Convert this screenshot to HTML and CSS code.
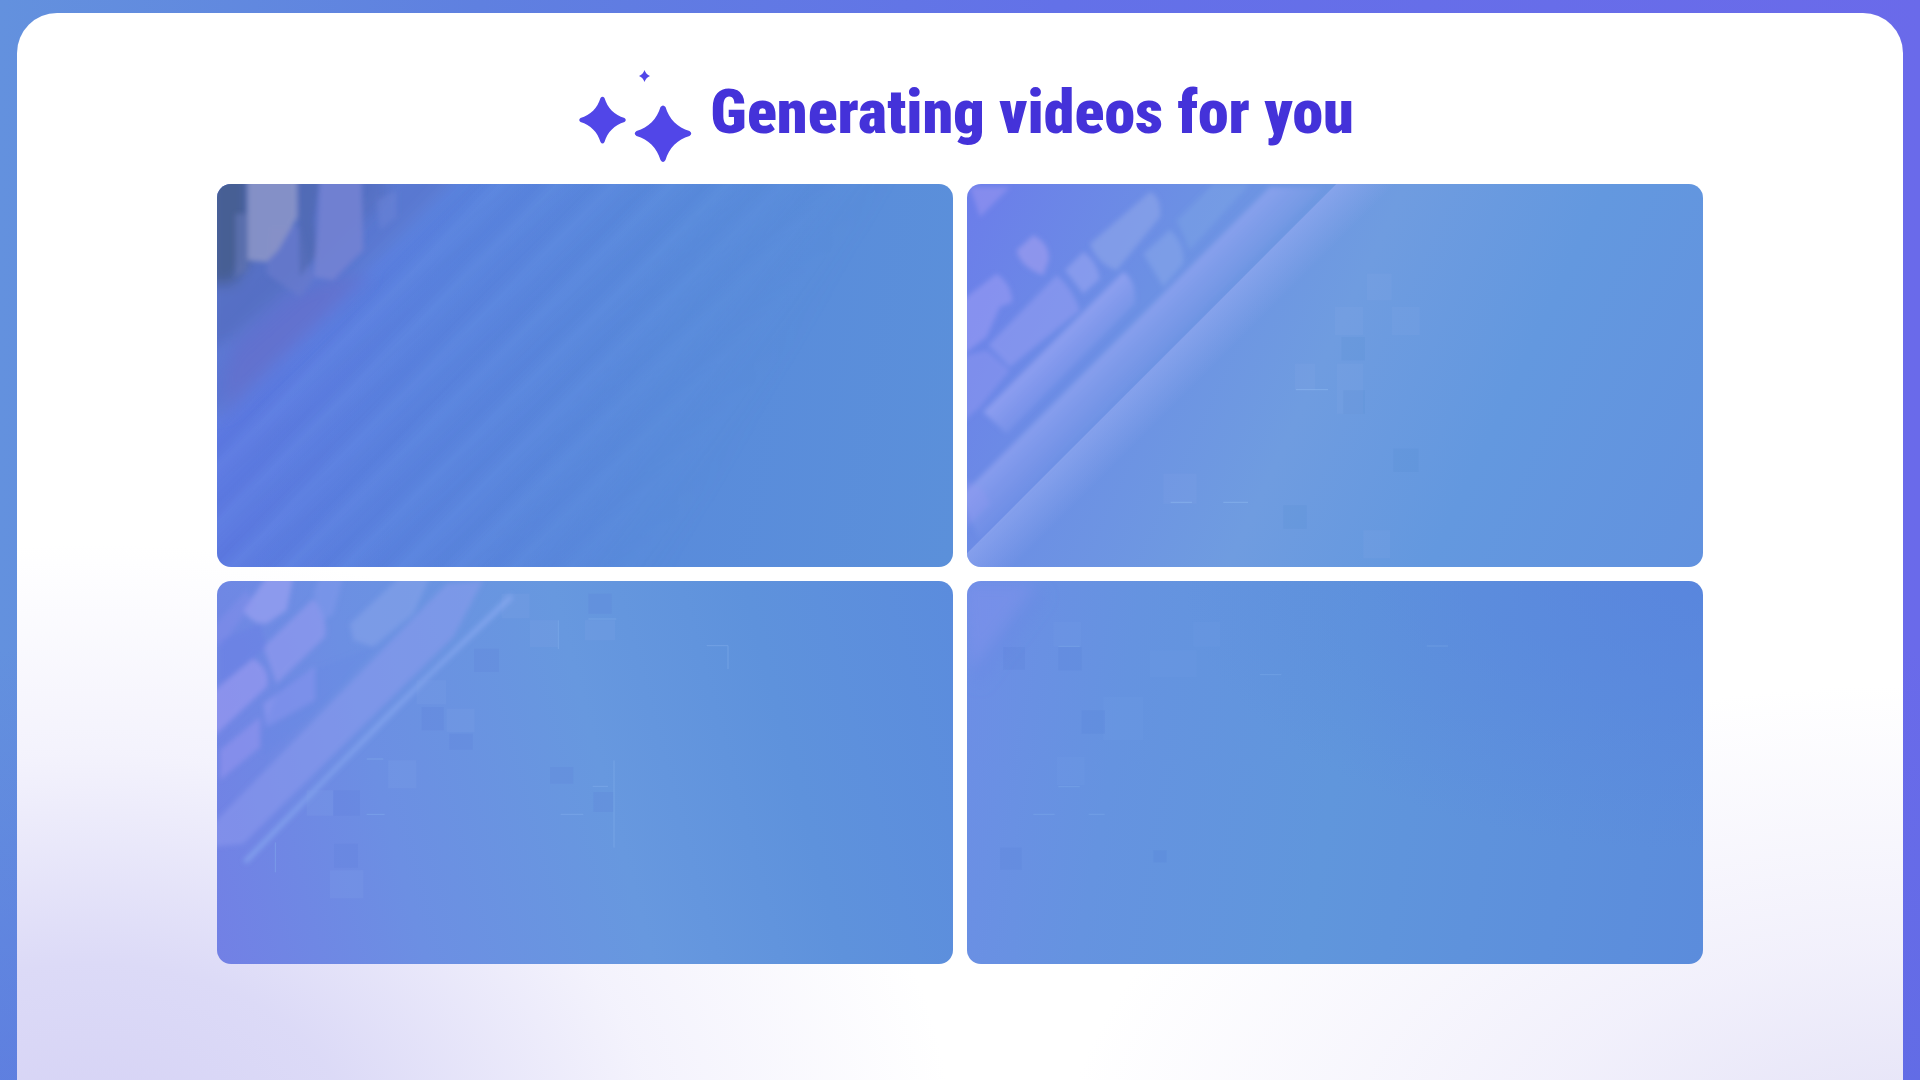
FILE: index.html
```html
<!DOCTYPE html>
<html lang="en">
<head>
    <meta charset="UTF-8">
    <meta name="viewport" content="width=device-width, initial-scale=1.0">
    <link rel="stylesheet" href="styles.css">
    <title>Generating videos</title>
</head>
<body>
    <main class="panel">
        <h1 class="title">
            <svg class="sparkles" viewBox="0 0 116 94" aria-hidden="true">
                <path d="M66.5 0 Q68 4.500 72 6 Q68 7.500 66.500 12 Q65 7.500 61 6 Q65 4.500 66.500 0Z"/>
                <path d="M22.500 28 Q24.500 25.500 26.500 28 C29.500 38 36.500 45 46.500 48 Q49 50 46.500 52 C36.500 55 29.500 62 26.500 72 Q24.500 75 22.500 72 C19.500 62 12.500 55 2.500 52 Q0 50 2.500 48 C12.500 45 19.500 38 22.500 28Z"/>
                <path d="M82.500 37 Q85 34 87.500 37 C91 49 99.500 57.500 111.500 61 Q115 63.500 111.500 66 C99.500 69.500 91 78 87.500 90 Q85 94 82.500 90 C79 78 70.500 69.500 58.500 66 Q55 63.500 58.500 61 C70.500 57.500 79 49 82.500 37Z"/>
            </svg>
            <span class="title-text">Generating videos for you</span>
        </h1>

        <div class="videos">
            <div class="video video-one">
                <svg viewBox="51 41 2208 1149" preserveAspectRatio="none" aria-hidden="true">
                    <defs>
                        <filter id="soft" x="-20%" y="-20%" width="140%" height="140%"><feGaussianBlur stdDeviation="8"/></filter>
                        <filter id="softer" x="-30%" y="-30%" width="160%" height="160%"><feGaussianBlur stdDeviation="20"/></filter>
                        <linearGradient id="edgeOuter" gradientUnits="userSpaceOnUse" x1="600" y1="600" x2="690" y2="690">
                            <stop offset="0" stop-color="#93aaf0" stop-opacity="0.65"/>
                            <stop offset="1" stop-color="#93aaf0" stop-opacity="0"/>
                        </linearGradient>
                        <linearGradient id="edgeMiddle" gradientUnits="userSpaceOnUse" x1="505" y1="505" x2="600" y2="600">
                            <stop offset="0" stop-color="#97a8f2" stop-opacity="0.65"/>
                            <stop offset="1" stop-color="#97a8f2" stop-opacity="0.05"/>
                        </linearGradient>
                        <linearGradient id="edgeInner" gradientUnits="userSpaceOnUse" x1="412" y1="412" x2="500" y2="500">
                            <stop offset="0" stop-color="#9ca8f4" stop-opacity="0.7"/>
                            <stop offset="1" stop-color="#9ca8f4" stop-opacity="0.1"/>
                        </linearGradient>
                        <linearGradient id="ridge" gradientUnits="userSpaceOnUse" x1="51" y1="41" x2="136" y2="126" spreadMethod="repeat">
                            <stop offset="0" stop-color="#6d9bea" stop-opacity="0.2"/>
                            <stop offset="0.65" stop-color="#4a74d0" stop-opacity="0.14"/>
                            <stop offset="1" stop-color="#6d9bea" stop-opacity="0.2"/>
                        </linearGradient>
                        <linearGradient id="ridgeFade" x1="0" y1="0" x2="1" y2="0.3">
                            <stop offset="0.1" stop-color="#fff"/>
                            <stop offset="0.6" stop-color="#bbb"/>
                            <stop offset="0.85" stop-color="#000"/>
                        </linearGradient>
                        <mask id="ridgeMask" maskUnits="userSpaceOnUse" x="51" y="41" width="2208" height="1149">
                            <rect x="51" y="41" width="2208" height="1149" fill="url(#ridgeFade)"/>
                        </mask>
                    </defs>
                    <rect x="51" y="41" width="2208" height="1149" fill="url(#ridge)" mask="url(#ridgeMask)"/>
                    <g filter="url(#softer)">
                        <path d="M20 0H800L60 740H20Z" fill="#5972c6" fill-opacity="0.55"/>
                        <path d="M20 0H560V90L380 260L100 500L20 540Z" fill="#526cb9" fill-opacity="0.55"/>
                        <path d="M20 0H150V260L100 340H20Z" fill="#465f94"/>
                        <path d="M60 600L400 300L520 320L80 740Z" fill="#5f73d2" fill-opacity="0.5"/>
                        <path d="M100 520L260 370L480 330L300 500L80 700Z" fill="#6570cd" fill-opacity="0.5"/>
                    </g>
                    <g filter="url(#soft)">
                        <path d="M210 170H300L340 330L300 380L200 310Z" fill="#687bcd" fill-opacity="0.7"/>
                        <path d="M142 20H292V140L235 240L200 275L142 270Z" fill="#8a94c8" fill-opacity="0.9"/>
                        <path d="M292 20H360L340 150L350 250L300 320Z" fill="#5069b0" fill-opacity="0.7"/>
                        <path d="M360 20H485L490 240L400 330L340 320L350 200Z" fill="#7482d3" fill-opacity="0.85"/>
                        <path d="M530 90L590 60V140L540 180Z" fill="#7186da" fill-opacity="0.4"/>
                        <path d="M106 130H142V300L106 320Z" fill="#5f73b4" fill-opacity="0.7"/>
                    </g>
                </svg>
            </div>
            <div class="video video-two">
                <svg viewBox="51 41 2208 1149" preserveAspectRatio="none" aria-hidden="true">
                    <path d="M20 1180L1200 0H1480L150 1330Z" fill="url(#edgeOuter)"/>
                    <g filter="url(#soft)">
                        <path d="M30 980L740 270L960 50H1120L90 1110Z" fill="url(#edgeMiddle)"/>
                        <path d="M100 725L520 305Q560 330 555 400L170 790Z" fill="url(#edgeInner)"/>
                        <path d="M115 525L320 315Q365 350 390 420L180 590Z" fill="#939df2" fill-opacity="0.6"/>
                        <path d="M420 220L600 65Q635 80 630 140L500 300Q440 280 420 220Z" fill="#90a7ea" fill-opacity="0.6"/>
                        <path d="M580 250L660 178Q705 220 700 280L640 350Z" fill="#8ba9ec" fill-opacity="0.5"/>
                        <path d="M200 240L250 195Q300 220 296 270L280 315Q210 290 200 240Z" fill="#9698ee" fill-opacity="0.8"/>
                        <path d="M345 300L400 245Q440 270 450 325L400 370Z" fill="#91a1f0" fill-opacity="0.7"/>
                        <path d="M30 395L140 310Q185 340 187 395L150 410L110 500L30 560Z" fill="#9599f3" fill-opacity="0.65"/>
                        <path d="M30 560L110 540L180 600L90 710L30 760Z" fill="#9499f1" fill-opacity="0.45"/>
                        <path d="M680 150L790 40H900L720 240Z" fill="#7fa8e6" fill-opacity="0.4"/>
                        <path d="M30 920L100 960L120 1000L30 1090Z" fill="#9499f1" fill-opacity="0.3"/>
                        <path d="M60 50L180 50L90 140Z" fill="#a39cf2" fill-opacity="0.45"/>
                    </g>
                    <g fill="#8caae8" fill-opacity="0.14">
                        <path d="M1155 410h84v84h-84zM1325 410h84v84h-84zM1250 310h75v80h-75zM1160 580h80v150h-80zM1035 580h60v80h-60zM640 910h100v90h-100zM1240 1080h80v84h-80z"/>
                        <path fill="#4f86ce" d="M1175 500h70v70h-70zM1330 835h75v70h-75zM1000 1005h70v70h-70zM1180 660h65v70h-65z"/>
                    </g>
                    <path d="M1038 658h96M662 996h64M820 996h74" stroke="#8db8f0" stroke-width="3" opacity="0.6"/>
                </svg>
            </div>
            <div class="video video-three">
                <svg viewBox="51 62 2208 1149" preserveAspectRatio="none" aria-hidden="true">
                    <g filter="url(#soft)">
                        <path d="M30 800L740 70L850 60L760 230L130 850L30 860Z" fill="#929ef0" fill-opacity="0.45"/>
                        <path d="M130 900L560 460L930 100L940 115L700 340L400 640L140 910Z" fill="#88a8f0" fill-opacity="0.75"/>
                        <path d="M20 410L160 295Q215 330 200 380L40 530Z" fill="#999af1" fill-opacity="0.65"/>
                        <path d="M190 260L340 115Q385 170 375 230L230 370Z" fill="#959bf0" fill-opacity="0.6"/>
                        <path d="M130 150L200 50H280L260 150L200 190Q150 190 130 150Z" fill="#98a0f1" fill-opacity="0.7"/>
                        <path d="M340 100L360 50H430L400 160L370 180Z" fill="#8499ed" fill-opacity="0.5"/>
                        <path d="M450 190L600 50H690L640 160L520 260L460 240Z" fill="#86a2ea" fill-opacity="0.6"/>
                        <path d="M190 430L300 350L345 320V420L200 500Z" fill="#9199f1" fill-opacity="0.6"/>
                        <path d="M60 570L180 470V560L60 660Z" fill="#9696f1" fill-opacity="0.55"/>
                        <path d="M20 220L140 90L160 130L60 260Z" fill="#8f92f0" fill-opacity="0.3"/>
                        <path d="M200 260L60 370V240L180 190Z" fill="#6a80e6" fill-opacity="0.5"/>
                        <path d="M240 370L540 250L330 470L190 590L180 540Z" fill="#6584e4" fill-opacity="0.25"/>
                    </g>
                    <g fill="#86a4ea" fill-opacity="0.18">
                        <path d="M905 100h84v74h-84zM990 180h84v80h-84zM650 360h88v72h-88zM565 600h84v84h-84zM320 690h80v76h-80zM390 930h100v84h-100zM740 445h84v70h-84zM1155 180h90v60h-90z"/>
                        <path fill="#5878d8" d="M822 265h75v70h-75zM748 520h70v48h-70zM402 850h72v72h-72zM400 690h80v76h-80zM665 440h66v70h-66zM1165 100h70v60h-70zM1050 620h70v50h-70zM1180 695h60v60h-60z"/>
                    </g>
                    <path d="M1165 176h84M1178 678h46M1082 762h68M500 762h54M500 596h50M1242 600v262M226 846v90M1075 180v86M1520 256h64v70" fill="none" stroke="#85b0ee" stroke-width="3" opacity="0.5"/>
                </svg>
            </div>
            <div class="video video-four">
                <svg viewBox="51 62 2208 1149" preserveAspectRatio="none" aria-hidden="true">
                    <g filter="url(#softer)">
                        <path d="M40 70H260L60 330Z" fill="#8492ee" fill-opacity="0.4"/>
                        <path d="M60 350L270 80L290 110L90 380Z" fill="#6a86e4" fill-opacity="0.4"/>
                    </g>
                    <g fill="#7fa6e8" fill-opacity="0.1">
                        <path d="M310 185h84v74h-84zM730 185h80v74h-80zM600 270h140v80h-140zM460 410h120v130h-120zM320 590h84v84h-84z"/>
                        <path fill="#4468cc" d="M325 260h70v70h-70zM160 260h65v68h-65zM150 862h65v66h-65zM395 450h70v70h-70zM610 870h40v36h-40z"/>
                    </g>
                    <path d="M325 258h64M930 343h64M325 679h64M250 762h64M416 762h48M1430 257h64" stroke="#82b0ec" stroke-width="3" opacity="0.4"/>
                </svg>
            </div>
        </div>
    </main>
</body>
</html>
```
FILE: styles.css
```css
body {
    margin: 0;
    padding: 13px 17px 0;
    min-height: 100vh;
    box-sizing: border-box;
    display: flex;
    font-family: "Roboto Condensed", Roboto, sans-serif;
    background:
        linear-gradient(to bottom, transparent 60%, rgba(90, 110, 225, 0.5)),
        linear-gradient(to right, #6391de, #5f80e0 25%, #6371e8 55%, #6a6aea);
}

.panel {
    flex: 1;
    padding: 57px 200px 0;
    border-radius: 40px 40px 0 0;
    background:
        radial-gradient(ellipse 860px 600px at 4% 106%, #d5d2f5, rgba(216, 214, 246, 0.9) 30%, rgba(232, 230, 250, 0.5) 65%, rgba(255, 255, 255, 0)),
        radial-gradient(ellipse 840px 480px at 100% 108%, #e2e0f6, rgba(236, 234, 250, 0.7) 45%, rgba(255, 255, 255, 0)),
        #ffffff;
}

/* heading */
.title {
    display: flex;
    align-items: center;
    justify-content: center;
    gap: 16px;
    margin: 0 0 20px;
    padding-left: 12px;
    color: #4432d9;
    font-size: 62px;
    font-weight: 900;
    line-height: 72px;
}

.title-text {
    padding-bottom: 10px;
}

.sparkles {
    width: 116px;
    height: 94px;
    flex: none;
    fill: #5146e8;
}

/* video placeholders */
.videos {
    display: grid;
    grid-template-columns: 1fr 1fr;
    gap: 14px;
}

.video {
    aspect-ratio: 736 / 383;
    border-radius: 14px;
    overflow: hidden;
}

.video svg {
    display: block;
    width: 100%;
    height: 100%;
}

.video-one {
    background: linear-gradient(100deg, #5f75e3, #5a82de 30%, #598bdb 60%, #5b90da);
}

.video-two {
    background: linear-gradient(115deg, #6b7dea, #6c90e4 25%, #6f9ce0 48%, #6398df 70%, #6292df);
}

.video-three {
    background: linear-gradient(75deg, #7280e5, #6c8fe3 25%, #6798df 52%, #5e92dc 75%, #5b8cdd);
}

.video-four {
    background:
        radial-gradient(ellipse at 100% 0, rgba(88, 132, 222, 0.8), rgba(88, 132, 222, 0) 50%),
        linear-gradient(100deg, #6d8ee6, #6593e0 22%, #6096dc 50%, #5b8cdc);
}
```
